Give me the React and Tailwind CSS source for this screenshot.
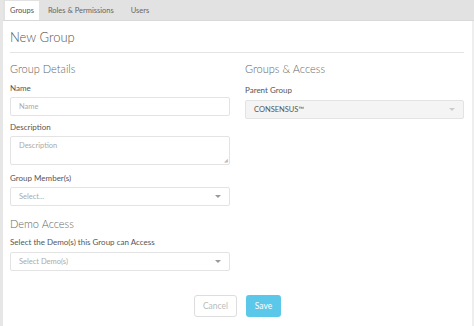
import React from 'react';

const Caret = ({ color = 'border-t-[#999]' }) => (
    <span className={`w-0 h-0 border-l-[3px] border-r-[3px] border-t-[3px] border-l-transparent border-r-transparent ${color}`} />
);

const App = () => {
    return (
        <div className="w-[474px] h-[326px] bg-white overflow-hidden flex text-[#333]" style={{ fontFamily: 'Lato, "Open Sans", sans-serif' }}>
            <div className="w-[3px] bg-[#e6e6e6]" />
            <div className="flex-1 flex flex-col">
                <div className="h-[21px] bg-[#e2e2e2] flex items-end pl-[2px] border-b border-[#d9d9d9]">
                    <div className="h-[19px] px-[5px] bg-white text-[7.5px] flex items-center text-[#555]">Groups</div>
                    <div className="h-[19px] px-[9px] text-[7.5px] flex items-center text-[#666]">Roles &amp; Permissions</div>
                    <div className="h-[19px] px-[8px] text-[7.5px] flex items-center text-[#666]">Users</div>
                </div>
                <div className="flex-1 flex">
                    <div className="flex-1 flex flex-col px-[7px]">
                        <h1 className="text-[13px] font-light text-[#555] mt-[6px] leading-[20px]">New Group</h1>
                        <div className="h-px bg-[#e5e5e5] mt-[5px] mr-[1px]" />
                        <div className="flex gap-[15px] mt-[8px]">
                            <div className="w-[220px] flex flex-col">
                                <h2 className="text-[11px] font-light text-[#666] leading-[16px]">Group Details</h2>
                                <label className="text-[8px] mt-[6px] leading-[10px] text-[#555]">Name</label>
                                <div className="mt-[4px] h-[19px] border border-[#e3e3e3] rounded-[2px] flex items-center px-[8px] text-[7.5px] text-[#aaa]">Name</div>
                                <label className="text-[8px] mt-[6px] leading-[10px] text-[#555]">Description</label>
                                <div className="mt-[4px] h-[29px] border border-[#e3e3e3] rounded-[2px] px-[8px] pt-[3px] text-[7.5px] text-[#aaa] relative">
                                    Description
                                    <span className="absolute right-[1px] bottom-[1px] text-[5px] text-[#bbb] leading-none">◢</span>
                                </div>
                                <label className="text-[8px] mt-[8px] leading-[10px] text-[#555]">Group Member(s)</label>
                                <div className="mt-[4px] h-[19px] border border-[#e3e3e3] rounded-[2px] flex items-center justify-between px-[8px] text-[7.5px] text-[#aaa]">
                                    <span>Select...</span>
                                    <Caret />
                                </div>
                                <h2 className="text-[11px] font-light text-[#666] leading-[16px] mt-[10px]">Demo Access</h2>
                                <label className="text-[8px] mt-[5px] leading-[10px] text-[#555]">Select the Demo(s) this Group can Access</label>
                                <div className="mt-[5px] h-[19px] border border-[#e3e3e3] rounded-[2px] flex items-center justify-between px-[8px] text-[7.5px] text-[#aaa]">
                                    <span>Select Demo(s)</span>
                                    <Caret />
                                </div>
                            </div>
                            <div className="w-[219px] flex flex-col">
                                <h2 className="text-[11px] font-light text-[#666] leading-[16px]">Groups &amp; Access</h2>
                                <label className="text-[8px] mt-[8px] leading-[10px] text-[#555]">Parent Group</label>
                                <div className="mt-[5px] h-[19px] bg-[#f4f4f4] border border-[#e3e3e3] rounded-[2px] flex items-center justify-between px-[8px] text-[7.5px] text-[#555]">
                                    <span>CONSENSUS™</span>
                                    <Caret color="border-t-[#ccc]" />
                                </div>
                            </div>
                        </div>
                        <div className="flex justify-center gap-[9px] mt-[24px]">
                            <button className="h-[22px] w-[43px] border border-[#ddd] rounded-[3px] text-[8.5px] text-[#bbb] bg-white">Cancel</button>
                            <button className="h-[22px] w-[35px] rounded-[3px] text-[8.5px] text-white bg-[#5bc8ea]">Save</button>
                        </div>
                    </div>
                    <div className="w-[2px] bg-[#eeeeee]" />
                </div>
            </div>
        </div>
    );
};

export default App;
